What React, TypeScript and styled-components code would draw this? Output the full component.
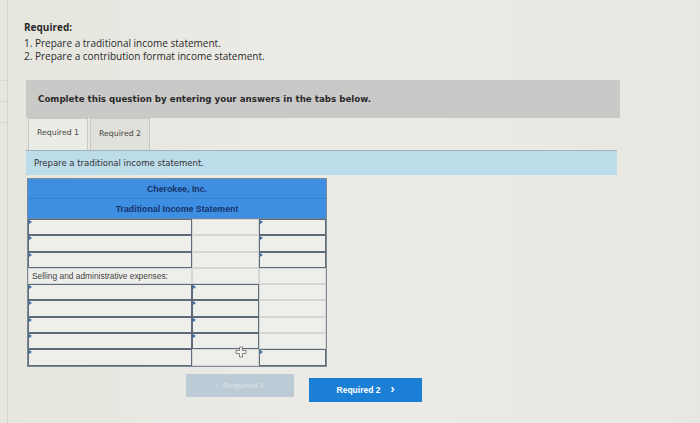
import styled, { createGlobalStyle } from "styled-components";

type CellKind = "input" | "blank";

const ROWS: { label?: string; cells?: CellKind[] }[] = [
  { cells: ["input", "blank", "input"] },
  { cells: ["input", "blank", "input"] },
  { cells: ["input", "blank", "input"] },
  { label: "Selling and administrative expenses:" },
  { cells: ["input", "input", "blank"] },
  { cells: ["input", "input", "blank"] },
  { cells: ["input", "input", "blank"] },
  { cells: ["input", "input", "blank"] },
  { cells: ["input", "blank", "input"] },
];

const GlobalStyle = createGlobalStyle`
  html, body {
    margin: 0;
    padding: 0;
    background: #e9e8e2;
  }
  body {
    font-family: "Open Sans", "Liberation Sans", sans-serif;
    color: #2b2b2b;
  }
`;

const App = () => {
  return (
    <>
      <GlobalStyle />
      <Page>
        <LeftRail>
          <RailLine />
          <RailLine />
          <RailLine />
        </LeftRail>
        <Main>
          <Required>
            <RequiredTitle>Required:</RequiredTitle>
            <RequiredLine>1. Prepare a traditional income statement.</RequiredLine>
            <RequiredLine>2. Prepare a contribution format income statement.</RequiredLine>
          </Required>

          <Banner>Complete this question by entering your answers in the tabs below.</Banner>

          <Tabs>
            <Tab $active>Required 1</Tab>
            <Tab>Required 2</Tab>
          </Tabs>

          <Instruction>Prepare a traditional income statement.</Instruction>

          <TableWrap>
            <Table>
              <HeaderRow>Cherokee, Inc.</HeaderRow>
              <HeaderRow $last>Traditional Income Statement</HeaderRow>
              {ROWS.map((r, i) =>
                r.label ? (
                  <Row key={i}>
                    <LabelCell>{r.label}</LabelCell>
                    <Cell $kind="blank" />
                    <Cell $kind="blank" />
                  </Row>
                ) : (
                  <Row key={i}>
                    {r.cells!.map((c, j) => (
                      <Cell key={j} $kind={c} />
                    ))}
                  </Row>
                )
              )}
            </Table>
            <Cursor width="12" height="12" viewBox="0 0 12 12">
              <path
                d="M4.5 1h3v3.5H11v3H7.5V11h-3V7.5H1v-3h3.5z"
                fill="#f4f4f0"
                stroke="#777"
                strokeWidth="0.9"
              />
            </Cursor>
          </TableWrap>

          <Nav>
            <PrevButton>
              <span>‹</span> Required 1
            </PrevButton>
            <NextButton>
              Required 2 <Chevron>›</Chevron>
            </NextButton>
          </Nav>
        </Main>
      </Page>
    </>
  );
};
export default App;

const Page = styled.div`
  display: flex;
  width: 700px;
  height: 423px;
  overflow: hidden;
  background: linear-gradient(90deg, #e6e6df 0%, #ecebe6 50%, #e9e7e2 100%);
`;

const LeftRail = styled.div`
  width: 7px;
  padding-top: 60px;
  border-right: 1px solid #d6d6d0;
  display: flex;
  flex-direction: column;
`;

const RailLine = styled.div`
  height: 20px;
  border-bottom: 1px solid #d6d6d0;
`;

const Main = styled.div`
  flex: 1;
  padding: 21px 0 0 16px;
  display: flex;
  flex-direction: column;
`;

const Required = styled.div`
  font-size: 10px;
  line-height: 13px;
  color: #2a2a2a;
`;

const RequiredTitle = styled.div`
  font-weight: 700;
  margin-bottom: 3px;
`;

const RequiredLine = styled.div``;

const Banner = styled.div`
  margin: 17px 0 0 2px;
  width: 594px;
  height: 38px;
  box-sizing: border-box;
  padding-left: 12px;
  display: flex;
  align-items: center;
  background: #c9c9c7;
  font-family: "DejaVu Sans", Verdana, sans-serif;
  font-weight: 700;
  font-size: 8.7px;
  color: #2a2a2a;
`;

const Tabs = styled.div`
  display: flex;
  gap: 2px;
  margin: 0 0 0 4px;
  height: 32px;
`;

const Tab = styled.div<{ $active?: boolean }>`
  width: 60px;
  box-sizing: border-box;
  border: 1px solid #c8c8c2;
  border-bottom: none;
  background: ${(p) => (p.$active ? "#ecece6" : "#e1e1db")};
  font-family: "DejaVu Sans", Verdana, sans-serif;
  font-size: 7.8px;
  color: #444;
  display: flex;
  justify-content: center;
  padding-top: ${(p) => (p.$active ? "9px" : "10px")};
`;

const Instruction = styled.div`
  margin-left: 2px;
  width: 591px;
  height: 25px;
  box-sizing: border-box;
  border-top: 1px solid #9fb3bd;
  background: #bcdcea;
  padding-left: 8px;
  display: flex;
  align-items: center;
  font-family: "DejaVu Sans", Verdana, sans-serif;
  font-size: 8.5px;
  color: #333;
`;

const TableWrap = styled.div`
  position: relative;
  margin: 3px 0 0 3px;
  width: 300px;
`;

const Table = styled.div`
  width: 300px;
  border: 1px solid #7e8a94;
  box-sizing: border-box;
  background: #eeeeea;
`;

const HeaderRow = styled.div<{ $last?: boolean }>`
  height: 19px;
  background: #3e8ee2;
  border-bottom: 1px solid ${(p) => (p.$last ? "#6a88a8" : "#3a7fcc")};
  display: flex;
  justify-content: center;
  align-items: center;
  font-family: "Liberation Sans", Arial, sans-serif;
  font-weight: 700;
  font-size: 8.8px;
  color: #17346a;
`;

const Row = styled.div`
  display: grid;
  grid-template-columns: 164px 67px 67px;
  height: 16.3px;
`;

const Cell = styled.div<{ $kind: CellKind }>`
  position: relative;
  box-sizing: border-box;
  border: 1px solid ${(p) => (p.$kind === "input" ? "#5d6b78" : "#d4d6d4")};
  border-top-width: ${(p) => (p.$kind === "input" ? "1.5px" : "1px")};
  background: #eeeeea;
  &::before {
    content: "";
    display: ${(p) => (p.$kind === "input" ? "block" : "none")};
    position: absolute;
    left: 0;
    top: 0;
    border-left: 3px solid #3a6fb0;
    border-top: 2px solid transparent;
    border-bottom: 2px solid transparent;
  }
`;

const LabelCell = styled.div`
  box-sizing: border-box;
  border: 1px solid #d4d6d4;
  padding-left: 3px;
  display: flex;
  align-items: center;
  white-space: nowrap;
  font-family: "Liberation Sans", Arial, sans-serif;
  font-size: 8.4px;
  color: #444;
`;

const Cursor = styled.svg`
  position: absolute;
  left: 208px;
  top: 168px;
`;

const Nav = styled.div`
  display: flex;
  align-items: flex-start;
  gap: 15px;
  margin: 7px 0 0 162px;
`;

const PrevButton = styled.div`
  width: 108px;
  height: 23px;
  background: #bccbd6;
  display: flex;
  align-items: center;
  justify-content: center;
  gap: 4px;
  font-family: "Liberation Sans", Arial, sans-serif;
  font-weight: 700;
  font-size: 8px;
  color: #d3dde4;
`;

const NextButton = styled.div`
  margin-top: 4px;
  width: 113px;
  height: 24px;
  background: #1b7fd6;
  display: flex;
  align-items: center;
  justify-content: center;
  gap: 10px;
  font-family: "Liberation Sans", Arial, sans-serif;
  font-weight: 700;
  font-size: 8.5px;
  color: #ffffff;
`;

const Chevron = styled.span`
  font-size: 12px;
  line-height: 1;
  margin-top: -1px;
`;
